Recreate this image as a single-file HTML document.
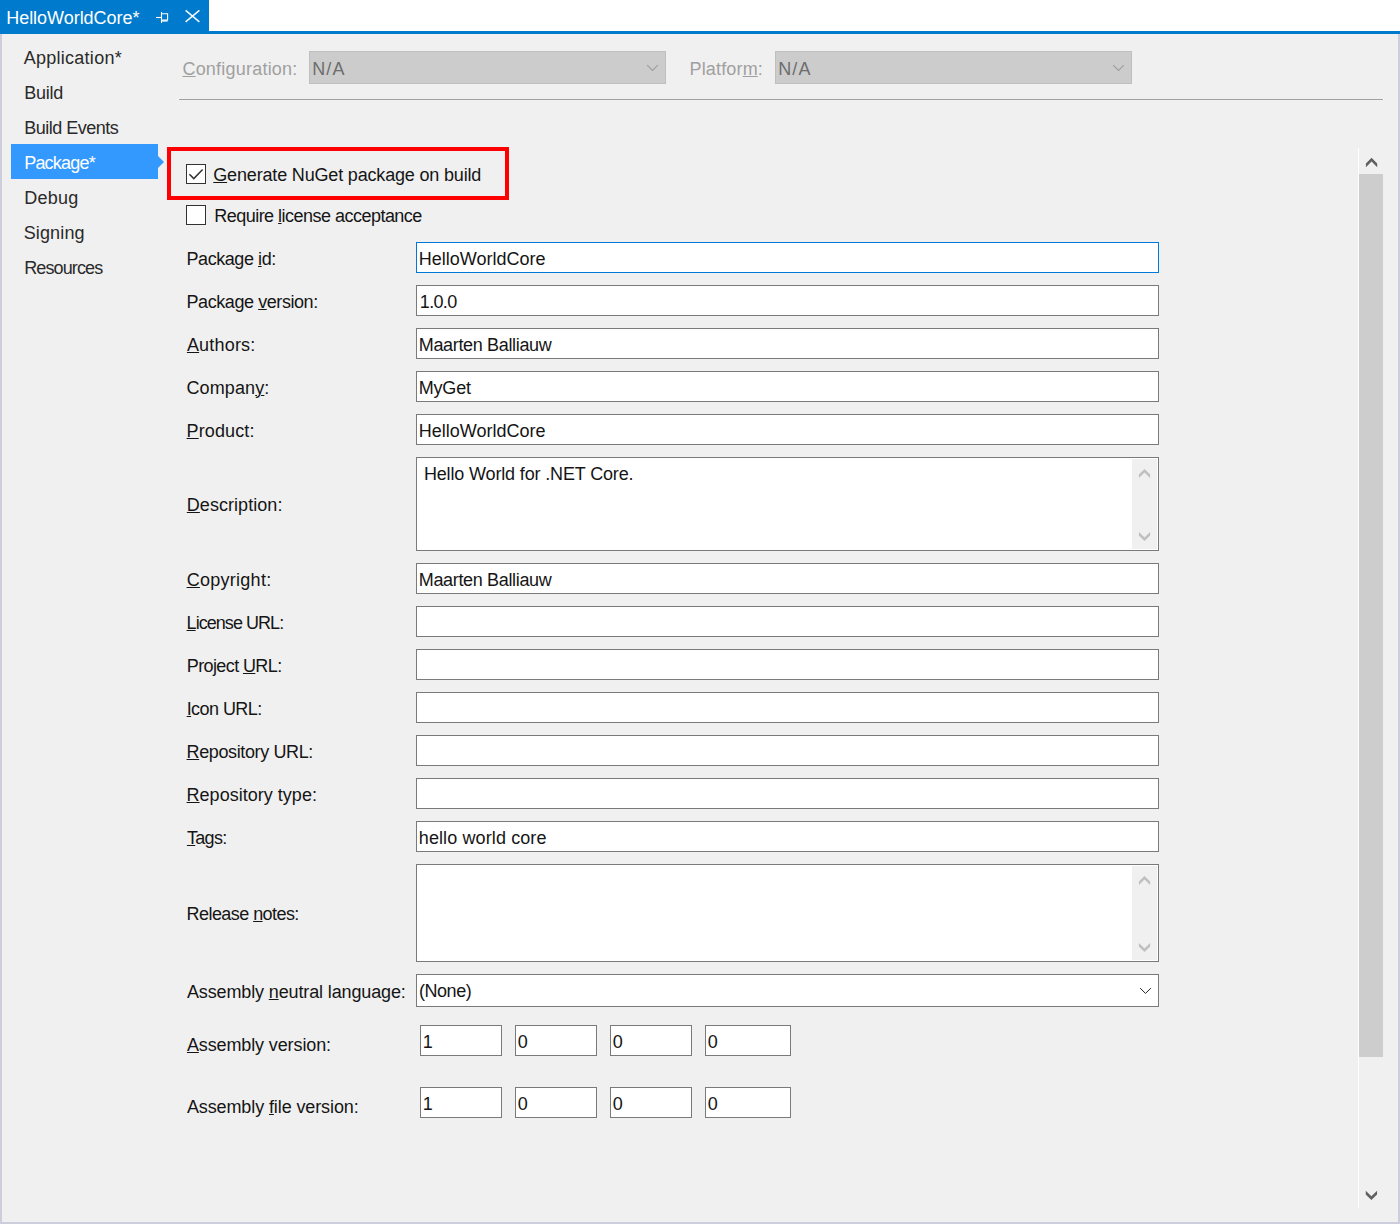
<!DOCTYPE html>
<html lang="en"><head><meta charset="utf-8"><title>HelloWorldCore - Package</title>
<style>
html,body{margin:0;padding:0}
body{width:1400px;height:1224px;position:relative;overflow:hidden;background:#f0f0f0;font:18px/20px "Liberation Sans", sans-serif}
div,span.t,svg{position:absolute;box-sizing:border-box;display:block}
span.t{white-space:pre}
u{text-decoration-thickness:1px;text-underline-offset:1px}
</style></head>
<body>
<div style="left:0px;top:0px;width:1400px;height:31px;background:#fff"></div>
<div style="left:0px;top:0px;width:209px;height:31px;background:#007acc"></div>
<div style="left:0px;top:31px;width:1400px;height:3px;background:#007acc"></div>
<div style="left:0px;top:34px;width:2px;height:1190px;background:#cccedb"></div>
<div style="left:1398px;top:34px;width:2px;height:1190px;background:#cccedb"></div>
<div style="left:0px;top:1222px;width:1400px;height:2px;background:#cccedb"></div>
<svg style="left:154px;top:9px" width="18" height="18" viewBox="0 0 18 18"><g fill="none" stroke="#fff" stroke-width="1.1"><path d="M2 8.5H7.5"/><path d="M7.5 3V14"/><path d="M7.5 4.7H13.6V11H7.5"/><path d="M7.5 11.9H13.6" stroke-width="1.4"/></g></svg>
<svg style="left:183px;top:8px" width="20" height="18" viewBox="0 0 20 18"><path d="M2.6 2.4L16.4 13.8M16.4 2.4L2.6 13.8" fill="none" stroke="#f4f9fd" stroke-width="1.5"/></svg>
<div style="left:11px;top:144px;width:147px;height:35px;background:#3399ff"></div>
<svg style="left:158px;top:155px" width="8" height="14" viewBox="0 0 8 14"><path d="M0 1L6 7L0 13Z" fill="#3399ff"/></svg>
<div style="left:309px;top:51px;width:357px;height:33px;background:#ccc;border:1px solid #bfbfbf"></div>
<div style="left:775px;top:51px;width:357px;height:33px;background:#ccc;border:1px solid #bfbfbf"></div>
<svg style="left:645.9px;top:64px" width="13" height="8" viewBox="0 0 13 8"><path d="M1.2 1.2L6.5 6.4L11.8 1.2" fill="none" stroke="#9e9e9e" stroke-width="1.15"/></svg>
<svg style="left:1111.9px;top:64px" width="13" height="8" viewBox="0 0 13 8"><path d="M1.2 1.2L6.5 6.4L11.8 1.2" fill="none" stroke="#9e9e9e" stroke-width="1.15"/></svg>
<div style="left:178px;top:99px;width:1206px;height:1px;background:#fff"></div>
<div style="left:179px;top:99px;width:1204px;height:1px;background:#a0a0a0"></div>
<div style="left:1358px;top:148px;width:1px;height:1060px;background:#fff"></div>
<div style="left:1359px;top:174px;width:24px;height:883px;background:#cdcdcd"></div>
<svg style="left:1364px;top:156px" width="14" height="12" viewBox="0 0 14 12"><polygon points="7.55,1.8 13.2,7.45 13.2,11.2 7.55,5.55 1.9,11.2 1.9,7.45" fill="#606060"/></svg>
<svg style="left:1364px;top:1189px" width="14" height="12" viewBox="0 0 14 12"><polygon points="7.4,11.1 13.05,5.45 13.05,1.7 7.4,7.35 1.75,1.7 1.75,5.45" fill="#606060"/></svg>
<div style="left:167px;top:147px;width:342px;height:53px;border:4px solid #f00"></div>
<div style="left:186px;top:164px;width:20px;height:20px;background:#fff;border:1px solid #333"></div>
<svg style="left:186px;top:164px" width="20" height="20" viewBox="0 0 20 20"><path d="M3.4 10.2L7.8 14.6L16.6 5.6" fill="none" stroke="#333" stroke-width="1.5"/></svg>
<div style="left:186px;top:205px;width:20px;height:20px;background:#fff;border:1px solid #333"></div>
<div style="left:416px;top:242px;width:743px;height:31px;background:#fff;border:1px solid #0078d7"></div>
<div style="left:416px;top:285px;width:743px;height:31px;background:#fff;border:1px solid #7a7a7a"></div>
<div style="left:416px;top:328px;width:743px;height:31px;background:#fff;border:1px solid #7a7a7a"></div>
<div style="left:416px;top:371px;width:743px;height:31px;background:#fff;border:1px solid #7a7a7a"></div>
<div style="left:416px;top:414px;width:743px;height:31px;background:#fff;border:1px solid #7a7a7a"></div>
<div style="left:416px;top:563px;width:743px;height:31px;background:#fff;border:1px solid #7a7a7a"></div>
<div style="left:416px;top:606px;width:743px;height:31px;background:#fff;border:1px solid #7a7a7a"></div>
<div style="left:416px;top:649px;width:743px;height:31px;background:#fff;border:1px solid #7a7a7a"></div>
<div style="left:416px;top:692px;width:743px;height:31px;background:#fff;border:1px solid #7a7a7a"></div>
<div style="left:416px;top:735px;width:743px;height:31px;background:#fff;border:1px solid #7a7a7a"></div>
<div style="left:416px;top:778px;width:743px;height:31px;background:#fff;border:1px solid #7a7a7a"></div>
<div style="left:416px;top:821px;width:743px;height:31px;background:#fff;border:1px solid #7a7a7a"></div>
<div style="left:416px;top:457px;width:743px;height:94px;background:#fff;border:1px solid #7a7a7a"></div>
<div style="left:1132px;top:459px;width:25px;height:90px;background:#f0f0f0"></div>
<svg style="left:1137px;top:468px" width="14" height="12" viewBox="0 0 14 12"><polygon points="7.5,1.0 13.1,6.6 13.1,10.1 7.5,4.5 1.9,10.1 1.9,6.6" fill="#bfbfbf"/></svg>
<svg style="left:1137px;top:530px" width="14" height="12" viewBox="0 0 14 12"><polygon points="7.5,11.0 13.1,5.4 13.1,1.9 7.5,7.5 1.9,1.9 1.9,5.4" fill="#bfbfbf"/></svg>
<div style="left:416px;top:864px;width:743px;height:98px;background:#fff;border:1px solid #7a7a7a"></div>
<div style="left:1132px;top:866px;width:25px;height:94px;background:#f0f0f0"></div>
<svg style="left:1137px;top:875px" width="14" height="12" viewBox="0 0 14 12"><polygon points="7.5,1.0 13.1,6.6 13.1,10.1 7.5,4.5 1.9,10.1 1.9,6.6" fill="#bfbfbf"/></svg>
<svg style="left:1137px;top:941px" width="14" height="12" viewBox="0 0 14 12"><polygon points="7.5,11.0 13.1,5.4 13.1,1.9 7.5,7.5 1.9,1.9 1.9,5.4" fill="#bfbfbf"/></svg>
<div style="left:416px;top:974px;width:743px;height:33px;background:#fff;border:1px solid #7a7a7a"></div>
<svg style="left:1138.7px;top:986.9px" width="13" height="8" viewBox="0 0 13 8"><path d="M1.2 1.2L6.5 6.4L11.8 1.2" fill="none" stroke="#222" stroke-width="1.0"/></svg>
<div style="left:420px;top:1025px;width:82px;height:31px;background:#fff;border:1px solid #7a7a7a"></div>
<div style="left:515px;top:1025px;width:82px;height:31px;background:#fff;border:1px solid #7a7a7a"></div>
<div style="left:610px;top:1025px;width:82px;height:31px;background:#fff;border:1px solid #7a7a7a"></div>
<div style="left:705px;top:1025px;width:86px;height:31px;background:#fff;border:1px solid #7a7a7a"></div>
<div style="left:420px;top:1087px;width:82px;height:31px;background:#fff;border:1px solid #7a7a7a"></div>
<div style="left:515px;top:1087px;width:82px;height:31px;background:#fff;border:1px solid #7a7a7a"></div>
<div style="left:610px;top:1087px;width:82px;height:31px;background:#fff;border:1px solid #7a7a7a"></div>
<div style="left:705px;top:1087px;width:86px;height:31px;background:#fff;border:1px solid #7a7a7a"></div>
<span class="t" style="left:6.21px;top:8px;color:#fff;letter-spacing:-0.03px;">HelloWorldCore*</span>
<span class="t" style="left:23.76px;top:48px;color:#2a2a2a;letter-spacing:0.26px;">Application*</span>
<span class="t" style="left:24.21px;top:83px;color:#2a2a2a;letter-spacing:-0.23px;">Build</span>
<span class="t" style="left:24.21px;top:118px;color:#2a2a2a;letter-spacing:-0.49px;">Build Events</span>
<span class="t" style="left:24.21px;top:153px;color:#fff;letter-spacing:-0.8px;">Package*</span>
<span class="t" style="left:24.21px;top:188px;color:#2a2a2a;letter-spacing:0.28px;">Debug</span>
<span class="t" style="left:23.72px;top:223px;color:#2a2a2a;letter-spacing:0.13px;">Signing</span>
<span class="t" style="left:24.21px;top:258px;color:#2a2a2a;letter-spacing:-0.88px;">Resources</span>
<span class="t" style="left:182.4px;top:59px;color:#a0a0a0;letter-spacing:0.22px;"><u>C</u>onfiguration:</span>
<span class="t" style="left:312.18px;top:59px;color:#6d6d6d;letter-spacing:1.18px;">N/A</span>
<span class="t" style="left:689.57px;top:59px;color:#a0a0a0;letter-spacing:0.15px;">Platfor<u>m</u>:</span>
<span class="t" style="left:778.18px;top:59px;color:#6d6d6d;letter-spacing:1.18px;">N/A</span>
<span class="t" style="left:213.28px;top:165px;color:#151515;letter-spacing:-0.17px;"><u>G</u>enerate NuGet package on build</span>
<span class="t" style="left:214.21px;top:206px;color:#151515;letter-spacing:-0.52px;">Require <u>l</u>icense acceptance</span>
<span class="t" style="left:186.54px;top:249px;color:#151515;letter-spacing:-0.44px;">Package <u>i</u>d:</span>
<span class="t" style="left:418.81px;top:249px;color:#151515;">HelloWorldCore</span>
<span class="t" style="left:186.54px;top:292px;color:#151515;letter-spacing:-0.43px;">Package <u>v</u>ersion:</span>
<span class="t" style="left:419.77px;top:292px;color:#151515;letter-spacing:-0.65px;">1.0.0</span>
<span class="t" style="left:186.91px;top:335px;color:#151515;letter-spacing:0.19px;"><u>A</u>uthors:</span>
<span class="t" style="left:418.81px;top:335px;color:#151515;letter-spacing:-0.34px;">Maarten Balliauw</span>
<span class="t" style="left:186.4px;top:378px;color:#151515;letter-spacing:0.13px;">Compan<u>y</u>:</span>
<span class="t" style="left:418.81px;top:378px;color:#151515;letter-spacing:-0.22px;">MyGet</span>
<span class="t" style="left:186.57px;top:421px;color:#151515;letter-spacing:0.12px;"><u>P</u>roduct:</span>
<span class="t" style="left:418.81px;top:421px;color:#151515;">HelloWorldCore</span>
<span class="t" style="left:186.64px;top:570px;color:#151515;letter-spacing:0.28px;"><u>C</u>opyright:</span>
<span class="t" style="left:418.81px;top:570px;color:#151515;letter-spacing:-0.34px;">Maarten Balliauw</span>
<span class="t" style="left:186.57px;top:613px;color:#151515;letter-spacing:-0.95px;"><u>L</u>icense URL:</span>
<span class="t" style="left:186.81px;top:656px;color:#151515;letter-spacing:-0.61px;">Project <u>U</u>RL:</span>
<span class="t" style="left:186.66px;top:699px;color:#151515;letter-spacing:-0.56px;"><u>I</u>con URL:</span>
<span class="t" style="left:186.57px;top:742px;color:#151515;letter-spacing:-0.38px;"><u>R</u>epository URL:</span>
<span class="t" style="left:186.57px;top:785px;color:#151515;letter-spacing:0.02px;"><u>R</u>epository type:</span>
<span class="t" style="left:186.93px;top:828px;color:#151515;letter-spacing:-0.68px;"><u>T</u>ags:</span>
<span class="t" style="left:418.78px;top:828px;color:#151515;letter-spacing:0.11px;">hello world core</span>
<span class="t" style="left:186.81px;top:495px;color:#151515;letter-spacing:0.05px;"><u>D</u>escription:</span>
<span class="t" style="left:423.91px;top:464px;color:#151515;letter-spacing:-0.15px;">Hello World for .NET Core.</span>
<span class="t" style="left:186.57px;top:904px;color:#151515;letter-spacing:-0.56px;">Release <u>n</u>otes:</span>
<span class="t" style="left:186.91px;top:982px;color:#151515;letter-spacing:-0.13px;">Assembly <u>n</u>eutral language:</span>
<span class="t" style="left:419.09px;top:981px;color:#151515;letter-spacing:-0.49px;">(None)</span>
<span class="t" style="left:186.91px;top:1035px;color:#151515;letter-spacing:-0.12px;"><u>A</u>ssembly version:</span>
<span class="t" style="left:422.72px;top:1032px;color:#151515;">1</span>
<span class="t" style="left:517.83px;top:1032px;color:#151515;">0</span>
<span class="t" style="left:612.83px;top:1032px;color:#151515;">0</span>
<span class="t" style="left:707.83px;top:1032px;color:#151515;">0</span>
<span class="t" style="left:186.91px;top:1097px;color:#151515;letter-spacing:-0.11px;">Assembly <u>f</u>ile version:</span>
<span class="t" style="left:422.72px;top:1094px;color:#151515;">1</span>
<span class="t" style="left:517.83px;top:1094px;color:#151515;">0</span>
<span class="t" style="left:612.83px;top:1094px;color:#151515;">0</span>
<span class="t" style="left:707.83px;top:1094px;color:#151515;">0</span>
</body></html>
